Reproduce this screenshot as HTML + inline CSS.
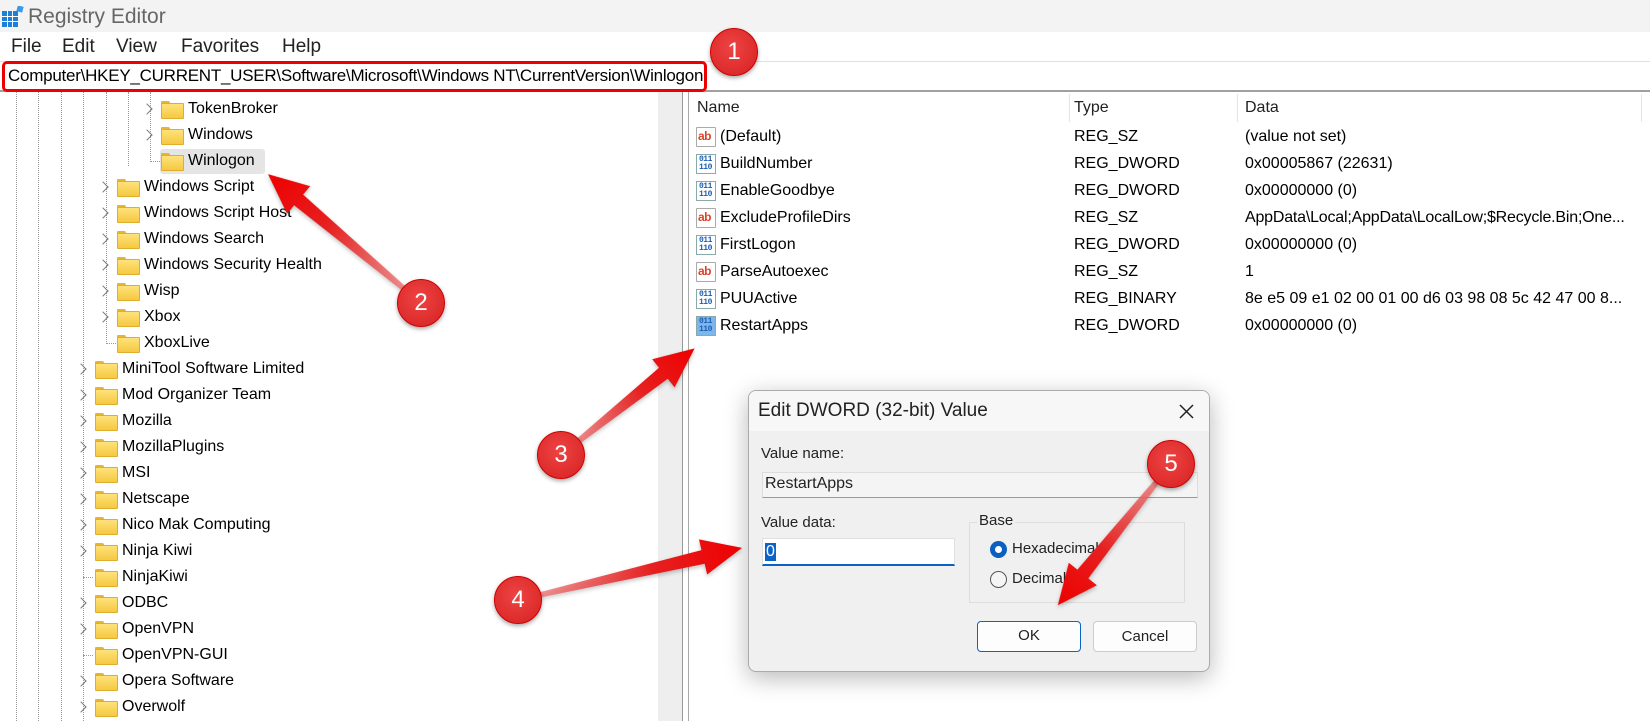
<!DOCTYPE html>
<html><head><meta charset="utf-8">
<style>
*{margin:0;padding:0;box-sizing:border-box}
body{width:1650px;height:721px;overflow:hidden;background:#fff;font-family:"Liberation Sans",sans-serif;color:#000;position:relative}
.a{position:absolute;white-space:nowrap}
.t{font-size:16px;line-height:20px}
.fold{position:absolute;width:21px;height:16px}
.fold:before{content:"";position:absolute;left:0;top:0;width:9px;height:4px;background:#e8b530;border-radius:1px 2px 0 0}
.fold:after{content:"";position:absolute;left:0;top:2px;width:21px;height:14px;background:linear-gradient(#ffe27a,#f5c842);border:1px solid #e0ae2e;border-radius:1px}
.chev{position:absolute;width:8px;height:8px;border-right:1.5px solid #777;border-top:1.5px solid #777;transform:rotate(45deg)}
.vl{position:absolute;width:0;border-left:1px dotted #999}
.hl{position:absolute;height:0;border-top:1px dotted #999}
.ic{position:absolute;width:20px;height:20px}
.ab{border:1px solid #aaa;background:#fff;border-radius:1px;font:bold 12px/16px "Liberation Sans",sans-serif;color:#d9442a;text-align:left;padding-left:1px;letter-spacing:-0.5px}
.bn{border:1px solid #8aa;background:#fff;font:bold 8px/8px "Liberation Mono",monospace;color:#1a5fb4;padding:1px 0 0 2px;letter-spacing:-0.5px}
.circ{position:absolute;width:48px;height:48px;border-radius:50%;background:radial-gradient(circle at 45% 40%,#ee4444,#d62020);border:1.5px solid #c00;color:#fff;font:24px/45px "Liberation Sans",sans-serif;text-align:center;box-shadow:0 2px 4px rgba(0,0,0,.35)}
</style></head><body>
<div class="a" style="left:0;top:0;width:1650px;height:32px;background:#f3f3f3"></div>
<svg class="a" style="left:2px;top:6px" width="22" height="22" viewBox="0 0 22 22"><rect x="0" y="5" width="16" height="16" fill="#1e7fd6"/><g stroke="#fff" stroke-width="1"><line x1="0" y1="10.5" x2="16" y2="10.5"/><line x1="0" y1="15.5" x2="16" y2="15.5"/><line x1="5.5" y1="5" x2="5.5" y2="21"/><line x1="10.5" y1="5" x2="10.5" y2="21"/></g><rect x="15" y="0" width="6" height="6" fill="#3a9ae8" transform="rotate(15 18 3)"/></svg>
<div class="a" style="left:28px;top:5px;font-size:21px;color:#666">Registry Editor</div>
<div class="a" style="left:11px;top:36px;font-size:19px;color:#222">File</div>
<div class="a" style="left:62px;top:36px;font-size:19px;color:#222">Edit</div>
<div class="a" style="left:116px;top:36px;font-size:19px;color:#222">View</div>
<div class="a" style="left:181px;top:36px;font-size:19px;color:#222">Favorites</div>
<div class="a" style="left:282px;top:36px;font-size:19px;color:#222">Help</div>
<div class="a" style="left:0;top:61px;width:1650px;height:1px;background:#e0e0e0"></div>
<div class="a" style="left:0;top:90px;width:1650px;height:2px;background:#a0a0a0"></div>
<div class="a" style="left:2px;top:61px;width:705px;height:31px;border:3px solid #ee0000;border-radius:5px"></div>
<div class="a" style="left:8px;top:66px;font-size:17px;letter-spacing:-0.25px;color:#000">Computer\HKEY_CURRENT_USER\Software\Microsoft\Windows NT\CurrentVersion\Winlogon</div>

<div class="a" style="left:658px;top:92px;width:24px;height:629px;background:#eeeeee"></div>
<div class="a" style="left:682px;top:92px;width:1px;height:629px;background:#999"></div>
<div class="a" style="left:688px;top:92px;width:1px;height:629px;background:#aaa"></div>

<div class="vl" style="left:16px;top:92px;height:629px"></div>
<div class="vl" style="left:38px;top:92px;height:629px"></div>
<div class="vl" style="left:61px;top:92px;height:629px"></div>
<div class="vl" style="left:83px;top:92px;height:629px"></div>
<div class="vl" style="left:106px;top:92px;height:252px"></div>
<div class="vl" style="left:128px;top:92px;height:74px"></div>
<div class="vl" style="left:150px;top:92px;height:70px"></div>
<div class="hl" style="left:150px;top:161px;width:10px"></div>
<div class="hl" style="left:106px;top:343px;width:10px"></div>
<div class="hl" style="left:83px;top:577px;width:10px"></div>
<div class="hl" style="left:83px;top:655px;width:10px"></div>

<div class="a" style="left:160px;top:149px;width:105px;height:25px;background:#e5e5e5;border-radius:3px"></div>

<div class="chev" style="left:143px;top:105px"></div><div class="fold" style="left:161px;top:101px"></div><div class="a t" style="left:188px;top:99px">TokenBroker</div>
<div class="chev" style="left:143px;top:131px"></div><div class="fold" style="left:161px;top:127px"></div><div class="a t" style="left:188px;top:125px">Windows</div>
<div class="fold" style="left:161px;top:153px"></div><div class="a t" style="left:188px;top:151px">Winlogon</div>

<div class="chev" style="left:99px;top:183px"></div><div class="fold" style="left:117px;top:179px"></div><div class="a t" style="left:144px;top:177px">Windows Script</div>
<div class="chev" style="left:99px;top:209px"></div><div class="fold" style="left:117px;top:205px"></div><div class="a t" style="left:144px;top:203px">Windows Script Host</div>
<div class="chev" style="left:99px;top:235px"></div><div class="fold" style="left:117px;top:231px"></div><div class="a t" style="left:144px;top:229px">Windows Search</div>
<div class="chev" style="left:99px;top:261px"></div><div class="fold" style="left:117px;top:257px"></div><div class="a t" style="left:144px;top:255px">Windows Security Health</div>
<div class="chev" style="left:99px;top:287px"></div><div class="fold" style="left:117px;top:283px"></div><div class="a t" style="left:144px;top:281px">Wisp</div>
<div class="chev" style="left:99px;top:313px"></div><div class="fold" style="left:117px;top:309px"></div><div class="a t" style="left:144px;top:307px">Xbox</div>
<div class="fold" style="left:117px;top:335px"></div><div class="a t" style="left:144px;top:333px">XboxLive</div>

<div class="chev" style="left:77px;top:365px"></div><div class="fold" style="left:95px;top:361px"></div><div class="a t" style="left:122px;top:359px">MiniTool Software Limited</div>
<div class="chev" style="left:77px;top:391px"></div><div class="fold" style="left:95px;top:387px"></div><div class="a t" style="left:122px;top:385px">Mod Organizer Team</div>
<div class="chev" style="left:77px;top:417px"></div><div class="fold" style="left:95px;top:413px"></div><div class="a t" style="left:122px;top:411px">Mozilla</div>
<div class="chev" style="left:77px;top:443px"></div><div class="fold" style="left:95px;top:439px"></div><div class="a t" style="left:122px;top:437px">MozillaPlugins</div>
<div class="chev" style="left:77px;top:469px"></div><div class="fold" style="left:95px;top:465px"></div><div class="a t" style="left:122px;top:463px">MSI</div>
<div class="chev" style="left:77px;top:495px"></div><div class="fold" style="left:95px;top:491px"></div><div class="a t" style="left:122px;top:489px">Netscape</div>
<div class="chev" style="left:77px;top:521px"></div><div class="fold" style="left:95px;top:517px"></div><div class="a t" style="left:122px;top:515px">Nico Mak Computing</div>
<div class="chev" style="left:77px;top:547px"></div><div class="fold" style="left:95px;top:543px"></div><div class="a t" style="left:122px;top:541px">Ninja Kiwi</div>
<div class="fold" style="left:95px;top:569px"></div><div class="a t" style="left:122px;top:567px">NinjaKiwi</div>
<div class="chev" style="left:77px;top:599px"></div><div class="fold" style="left:95px;top:595px"></div><div class="a t" style="left:122px;top:593px">ODBC</div>
<div class="chev" style="left:77px;top:625px"></div><div class="fold" style="left:95px;top:621px"></div><div class="a t" style="left:122px;top:619px">OpenVPN</div>
<div class="fold" style="left:95px;top:647px"></div><div class="a t" style="left:122px;top:645px">OpenVPN-GUI</div>
<div class="chev" style="left:77px;top:677px"></div><div class="fold" style="left:95px;top:673px"></div><div class="a t" style="left:122px;top:671px">Opera Software</div>
<div class="chev" style="left:77px;top:703px"></div><div class="fold" style="left:95px;top:699px"></div><div class="a t" style="left:122px;top:697px">Overwolf</div>

<div class="a t" style="left:697px;top:98px;color:#222">Name</div>
<div class="a" style="left:1069px;top:94px;width:1px;height:28px;background:#e5e5e5"></div>
<div class="a t" style="left:1074px;top:98px;color:#222">Type</div>
<div class="a" style="left:1237px;top:94px;width:1px;height:28px;background:#e5e5e5"></div>
<div class="a t" style="left:1245px;top:98px;color:#222">Data</div>
<div class="a" style="left:1641px;top:94px;width:1px;height:28px;background:#e5e5e5"></div>

<div class="ic ab" style="left:696px;top:127px">ab</div><div class="a t" style="left:720px;top:127px">(Default)</div><div class="a t" style="left:1074px;top:127px">REG_SZ</div><div class="a t" style="left:1245px;top:127px">(value not set)</div>
<div class="ic bn" style="left:696px;top:154px">011<br>110</div><div class="a t" style="left:720px;top:154px">BuildNumber</div><div class="a t" style="left:1074px;top:154px">REG_DWORD</div><div class="a t" style="left:1245px;top:154px">0x00005867 (22631)</div>
<div class="ic bn" style="left:696px;top:181px">011<br>110</div><div class="a t" style="left:720px;top:181px">EnableGoodbye</div><div class="a t" style="left:1074px;top:181px">REG_DWORD</div><div class="a t" style="left:1245px;top:181px">0x00000000 (0)</div>
<div class="ic ab" style="left:696px;top:208px">ab</div><div class="a t" style="left:720px;top:208px">ExcludeProfileDirs</div><div class="a t" style="left:1074px;top:208px">REG_SZ</div><div class="a t" style="left:1245px;top:208px;letter-spacing:-0.2px">AppData\Local;AppData\LocalLow;$Recycle.Bin;One...</div>
<div class="ic bn" style="left:696px;top:235px">011<br>110</div><div class="a t" style="left:720px;top:235px">FirstLogon</div><div class="a t" style="left:1074px;top:235px">REG_DWORD</div><div class="a t" style="left:1245px;top:235px">0x00000000 (0)</div>
<div class="ic ab" style="left:696px;top:262px">ab</div><div class="a t" style="left:720px;top:262px">ParseAutoexec</div><div class="a t" style="left:1074px;top:262px">REG_SZ</div><div class="a t" style="left:1245px;top:262px">1</div>
<div class="ic bn" style="left:696px;top:289px">011<br>110</div><div class="a t" style="left:720px;top:289px">PUUActive</div><div class="a t" style="left:1074px;top:289px">REG_BINARY</div><div class="a t" style="left:1245px;top:289px">8e e5 09 e1 02 00 01 00 d6 03 98 08 5c 42 47 00 8...</div>
<div class="ic bn" style="left:696px;top:316px;background:#7fb6ea">011<br>110</div><div class="a t" style="left:720px;top:316px">RestartApps</div><div class="a t" style="left:1074px;top:316px">REG_DWORD</div><div class="a t" style="left:1245px;top:316px">0x00000000 (0)</div>

<div class="a" style="left:748px;top:390px;width:462px;height:282px;background:#f0f0f0;border:1px solid #aaa;border-radius:8px;box-shadow:0 6px 24px rgba(0,0,0,.28);overflow:hidden">
  <div class="a" style="left:0;top:0;width:462px;height:40px;background:#f7f7f7"></div>
  <div class="a" style="left:9px;top:9px;font-size:19px;color:#222">Edit DWORD (32-bit) Value</div>
  <svg class="a" style="left:430px;top:13px" width="15" height="15"><path d="M1 1L14 14M14 1L1 14" stroke="#222" stroke-width="1.5"/></svg>
  <div class="a" style="left:12px;top:54px;font-size:15px;color:#222">Value name:</div>
  <div class="a" style="left:13px;top:81px;width:436px;height:26px;background:#f4f4f4;border:1px solid #ddd;border-bottom:1.5px solid #999"></div>
  <div class="a" style="left:16px;top:84px;font-size:16px;color:#222">RestartApps</div>
  <div class="a" style="left:12px;top:123px;font-size:15px;color:#222">Value data:</div>
  <div class="a" style="left:13px;top:147px;width:193px;height:28px;background:#fff;border:1px solid #e0e0e0;border-bottom:2px solid #0a64c8"></div>
  <div class="a" style="left:16px;top:152px;font-size:16px;line-height:18px;background:#0a64c8;color:#fff;padding:0 1px">0</div>
  <div class="a" style="left:220px;top:131px;width:216px;height:81px;border:1px solid #ddd"></div>
  <div class="a" style="left:228px;top:121px;font-size:15px;color:#222;background:#f0f0f0;padding:0 2px">Base</div>
  <div class="a" style="left:241px;top:150px;width:17px;height:17px;border-radius:50%;background:#0a5fbf"></div>
  <div class="a" style="left:246px;top:155px;width:7px;height:7px;border-radius:50%;background:#fff"></div>
  <div class="a" style="left:263px;top:149px;font-size:15px;color:#222">Hexadecimal</div>
  <div class="a" style="left:241px;top:180px;width:17px;height:17px;border-radius:50%;border:1px solid #555;background:#f5f5f5"></div>
  <div class="a" style="left:263px;top:179px;font-size:15px;color:#222">Decimal</div>
  <div class="a" style="left:228px;top:230px;width:104px;height:31px;background:#fdfdfd;border:1.5px solid #0a64c8;border-radius:4px;font-size:15px;line-height:28px;text-align:center;color:#222">OK</div>
  <div class="a" style="left:344px;top:230px;width:104px;height:31px;background:#fdfdfd;border:1px solid #ccc;border-radius:4px;font-size:15px;line-height:29px;text-align:center;color:#222">Cancel</div>
</div>

<svg class="a" style="left:0;top:0" width="1650" height="721">
<defs><linearGradient id="g" x1="0" y1="0" x2="1" y2="0"><stop offset="0" stop-color="#f08080" stop-opacity=".7"/><stop offset=".6" stop-color="#e62020"/><stop offset="1" stop-color="#ee0000"/></linearGradient></defs>
<g fill="url(#g)" style="filter:drop-shadow(0 2px 2px rgba(0,0,0,.25))">
<polygon transform="translate(421,303) rotate(220.1)" points="0,-2 160,-7 160,-18 200,0 160,18 160,7 0,2"/>
<polygon transform="translate(561,455) rotate(-38.6)" points="0,-2 131,-7 131,-18 171,0 131,18 131,7 0,2"/>
<polygon transform="translate(518,600) rotate(-13.1)" points="0,-2 190,-7 190,-18 230,0 190,18 190,7 0,2"/>
<polygon transform="translate(1171,464) rotate(128.7)" points="0,-2 141,-7 141,-18 181,0 141,18 141,7 0,2"/>
</g></svg>
<div class="circ" style="left:710px;top:28px">1</div>
<div class="circ" style="left:397px;top:279px">2</div>
<div class="circ" style="left:537px;top:431px">3</div>
<div class="circ" style="left:494px;top:576px">4</div>
<div class="circ" style="left:1147px;top:440px">5</div>
</body></html>
